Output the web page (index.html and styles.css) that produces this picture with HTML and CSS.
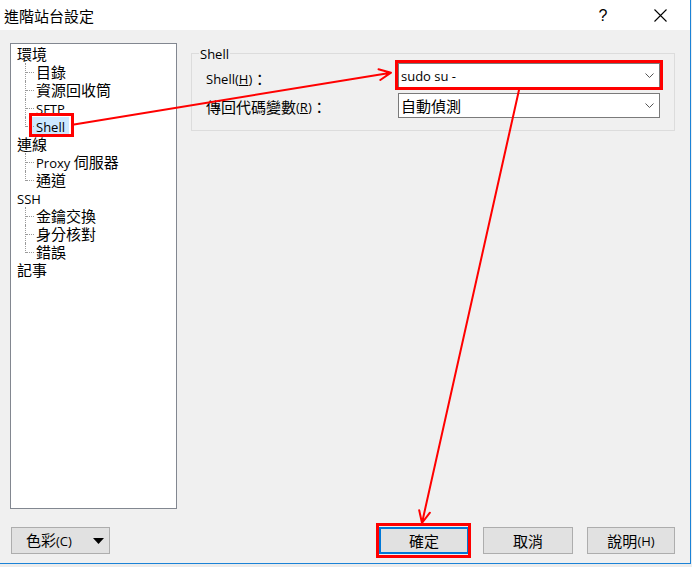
FILE: index.html
```html
<!DOCTYPE html>
<html lang="zh-Hant">
<head>
<meta charset="utf-8">
<title>進階站台設定</title>
<link rel="stylesheet" href="styles.css">
</head>
<body>
<div class="window">
  <header class="titlebar">
    <span class="title">進階站台設定</span>
    <span class="help">?</span>
    <span class="close"><svg width="13" height="13" viewBox="0 0 13 13"><path d="M0.5 0.5L12.5 12.5M12.5 0.5L0.5 12.5" stroke="#000" stroke-width="1.1" fill="none"/></svg></span>
  </header>
  <div class="content">
    <div class="main">
      <div class="tree">
        <ul class="roots">
          <li>
            <div class="row"><span class="lbl">環境</span></div>
            <ul class="kids">
              <li><div class="row"><span class="lbl">目錄</span></div></li>
              <li><div class="row"><span class="lbl">資源回收筒</span></div></li>
              <li><div class="row"><span class="lbl"><span class="en">SFTP</span></span></div></li>
              <li><div class="row"><span class="lbl sel"><span class="en">Shell</span></span></div></li>
            </ul>
          </li>
          <li>
            <div class="row"><span class="lbl">連線</span></div>
            <ul class="kids">
              <li><div class="row"><span class="lbl"><span class="en">Proxy </span>伺服器</span></div></li>
              <li><div class="row"><span class="lbl">通道</span></div></li>
            </ul>
          </li>
          <li>
            <div class="row"><span class="lbl"><span class="en">SSH</span></span></div>
            <ul class="kids">
              <li><div class="row"><span class="lbl">金鑰交換</span></div></li>
              <li><div class="row"><span class="lbl">身分核對</span></div></li>
              <li><div class="row"><span class="lbl">錯誤</span></div></li>
            </ul>
          </li>
          <li>
            <div class="row"><span class="lbl">記事</span></div>
          </li>
        </ul>
      </div>
      <div class="panel">
        <fieldset class="group">
          <legend><span class="en">Shell</span></legend>
          <div class="form">
            <label class="flabel first"><span class="en">Shell(<u>H</u>)</span>：</label>
            <div class="combo"><span class="en">sudo su -</span><svg class="chev" width="9" height="5" viewBox="0 0 9 5"><path d="M0.5 0.5L4.5 4.5L8.5 0.5" stroke="#555" stroke-width="1" fill="none"/></svg></div>
            <label class="flabel second">傳回代碼變數<span class="en">(<u>R</u>)</span>：</label>
            <div class="combo"><span>自動偵測</span><svg class="chev" width="9" height="5" viewBox="0 0 9 5"><path d="M0.5 0.5L4.5 4.5L8.5 0.5" stroke="#555" stroke-width="1" fill="none"/></svg></div>
          </div>
        </fieldset>
      </div>
    </div>
    <div class="buttons">
      <button class="btn btn-color"><span>色彩<span class="en">(C)</span></span><svg width="11" height="6" viewBox="0 0 11 6"><polygon points="0,0 11,0 5.5,6" fill="#000"/></svg></button>
      <button class="btn btn-ok">確定</button>
      <button class="btn btn-cancel">取消</button>
      <button class="btn btn-help">說明<span class="en">(H)</span></button>
    </div>
  </div>
  <svg class="marks" width="692" height="567" viewBox="0 0 692 567">
    <g fill="none" stroke="#ff0000" stroke-width="3">
      <rect x="30.5" y="114.5" width="42" height="21"/>
      <rect x="396.5" y="61.5" width="265" height="27"/>
      <rect x="377.5" y="524.5" width="92" height="32"/>
    </g>
    <g fill="none" stroke="#ff0000" stroke-width="2" stroke-linecap="round" stroke-linejoin="round">
      <path d="M74 124.5L391 72.7M380.3 80L391 72.7L378.5 69.2"/>
      <path d="M519 90L422 523M429.9 512.7L422 523L419.2 510.3"/>
    </g>
  </svg>
</div>
</body>
</html>
```
FILE: styles.css
```css
html, body {
  margin: 0;
  padding: 0;
  background: #ececec;
}
body {
  font-family: "Noto Sans CJK TC", sans-serif;
  font-size: 15px;
  line-height: 18px;
  color: #000;
  width: 692px;
  height: 567px;
  overflow: hidden;
}
.en {
  font-family: "Open Sans", "Noto Sans CJK TC", sans-serif;
  font-size: 13px;
}
.window {
  position: relative;
  width: 691px;
  height: 564px;
  box-sizing: border-box;
  border-right: 1px solid #1b82d6;
  border-bottom: 1px solid #1b82d6;
  background: #f0f0f0;
}
.titlebar {
  height: 30px;
  background: #fff;
  display: flex;
  align-items: center;
  padding: 1px 20px 0 4px;
  box-sizing: border-box;
}
.title {
  font-size: 15px;
}
.help {
  margin-left: auto;
  width: 20px;
  text-align: center;
  font-family: "Liberation Sans", sans-serif;
  font-size: 16px;
}
.close {
  margin-left: 37px;
  width: 20px;
  height: 13px;
  display: flex;
  justify-content: center;
}
.content {
  padding: 13px 15px 0 10px;
}
.main {
  display: flex;
  gap: 14px;
  height: 466px;
}
.tree {
  width: 167px;
  flex: none;
  box-sizing: border-box;
  border: 1px solid #828790;
  background: #fff;
  padding: 1px 0 0 4px;
}
.tree ul {
  list-style: none;
  margin: 0;
  padding: 0;
}
.row {
  height: 18px;
  display: flex;
  align-items: center;
  white-space: nowrap;
}
.lbl {
  display: block;
  height: 18px;
  line-height: 18px;
  padding: 0 2px;
}
.kids li {
  position: relative;
}
.kids .row {
  padding-left: 16px;
}
.kids .lbl {
  padding: 0 4px 0 5px;
}
.kids li::before {
  content: "";
  position: absolute;
  left: 10px;
  top: 0;
  height: 18px;
  border-left: 1px dotted #9a9a9a;
}
.kids li:last-child::before {
  height: 10px;
}
.kids li::after {
  content: "";
  position: absolute;
  left: 11px;
  top: 9px;
  width: 8px;
  border-top: 1px dotted #9a9a9a;
}
.sel {
  background: #cce8ff;
}
.panel {
  flex: 1;
  padding-top: 2px;
}
.group {
  margin: 0;
  padding: 0;
  min-width: 0;
  border: 1px solid #dcdcdc;
}
.group legend {
  margin-left: 7px;
  padding: 0 1px;
  line-height: 16px;
  height: 16px;
}
.form {
  display: grid;
  grid-template-columns: 192px 262px;
  row-gap: 5px;
  padding: 2px 14px 12px 14px;
}
.flabel {
  display: flex;
  align-items: center;
  white-space: nowrap;
  height: 25px;
  box-sizing: border-box;
}
.flabel.first {
  padding-top: 6px;
}
.flabel.second {
  padding-top: 2px;
}
.flabel u {
  text-decoration: underline;
  text-underline-offset: 1px;
}
.combo {
  height: 25px;
  box-sizing: border-box;
  border: 1px solid #7a7a7a;
  background: #fff;
  display: flex;
  align-items: center;
  justify-content: space-between;
  padding: 0 5px 0 2px;
}
.chev {
  display: block;
}
.buttons {
  display: flex;
  gap: 14px;
  margin-top: 18px;
  height: 27px;
}
.btn {
  box-sizing: border-box;
  height: 27px;
  margin: 0;
  border: 1px solid #adadad;
  background: #e1e1e1;
  font-family: "Noto Sans CJK TC", sans-serif;
  font-size: 15px;
  line-height: 18px;
  color: #000;
  display: flex;
  align-items: center;
  justify-content: center;
  padding: 0;
}
.btn-color {
  margin-left: 1px;
  width: 99px;
  justify-content: space-between;
  padding: 0 5px 0 14px;
}
.btn-ok {
  margin-left: auto;
  width: 90px;
  border: 2px solid #0078d7;
}
.btn-cancel {
  width: 90px;
}
.btn-help {
  width: 88px;
}
.marks {
  position: absolute;
  left: 0;
  top: 0;
  pointer-events: none;
  overflow: visible;
}
```
